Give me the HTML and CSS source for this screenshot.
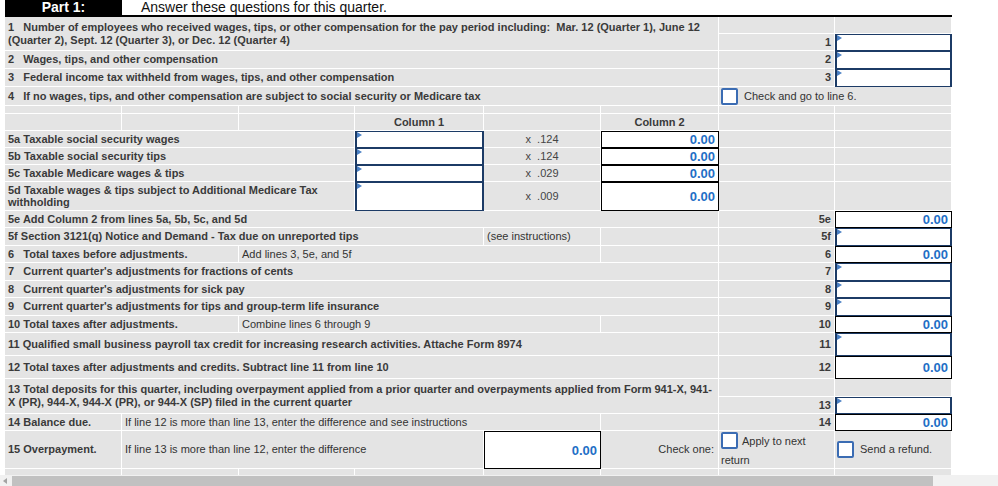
FILE: index.html
```html
<!DOCTYPE html>
<html lang="en">
<head>
    <meta charset="UTF-8">
    <title>Form 941 - Part 1</title>
    <link rel="stylesheet" href="styles.css">
</head>
<body>

    <div class="viewport">
        <div class="sheet">
            <!-- header -->
            <div class="part">Part 1:</div>
            <div class="title s7">Answer these questions for this quarter.</div>

            <!-- line 1 -->
            <div class="c lbl s6 r2">1&nbsp;&nbsp; Number of employees who received wages, tips, or other compensation for the pay period including:&nbsp; Mar. 12 (Quarter 1), June 12 (Quarter 2), Sept. 12 (Quarter 3), or Dec. 12 (Quarter 4)</div>
            <div class="c"></div>
            <div class="c"></div>
            <div class="c num">1</div>
            <div class="c in"></div>

            <div class="c lbl s6">2&nbsp;&nbsp; Wages, tips, and other compensation</div>
            <div class="c num">2</div>
            <div class="c in"></div>

            <div class="c lbl s6">3&nbsp;&nbsp; Federal income tax withheld from wages, tips, and other compensation</div>
            <div class="c num">3</div>
            <div class="c in"></div>

            <div class="c lbl s6">4&nbsp;&nbsp; If no wages, tips, and other compensation are subject to social security or Medicare tax</div>
            <div class="c s2 check"><span class="box"></span>Check and go to line 6.</div>

            <!-- spacer + column heads -->
            <div class="c"></div><div class="c"></div><div class="c"></div><div class="c"></div>
            <div class="c"></div><div class="c"></div><div class="c"></div><div class="c"></div>

            <div class="c"></div><div class="c"></div><div class="c"></div>
            <div class="c head">Column 1</div>
            <div class="c"></div>
            <div class="c head">Column 2</div>
            <div class="c"></div><div class="c"></div>

            <!-- line 5 -->
            <div class="c lbl s3">5a Taxable social security wages</div>
            <div class="c in"></div>
            <div class="c rate">x&nbsp;&nbsp;.124</div>
            <div class="c out">0.00</div>
            <div class="c"></div><div class="c"></div>

            <div class="c lbl s3">5b Taxable social security tips</div>
            <div class="c in"></div>
            <div class="c rate">x&nbsp;&nbsp;.124</div>
            <div class="c out">0.00</div>
            <div class="c"></div><div class="c"></div>

            <div class="c lbl s3">5c Taxable Medicare wages &amp; tips</div>
            <div class="c in"></div>
            <div class="c rate">x&nbsp;&nbsp;.029</div>
            <div class="c out">0.00</div>
            <div class="c"></div><div class="c"></div>

            <div class="c lbl s3 tight">5d Taxable wages &amp; tips subject to Additional Medicare Tax withholding</div>
            <div class="c in"></div>
            <div class="c rate">x&nbsp;&nbsp;.009</div>
            <div class="c out">0.00</div>
            <div class="c"></div><div class="c"></div>

            <div class="c lbl s6">5e Add Column 2 from lines 5a, 5b, 5c, and 5d</div>
            <div class="c num">5e</div>
            <div class="c out">0.00</div>

            <div class="c lbl s4">5f Section 3121(q) Notice and Demand - Tax due on unreported tips</div>
            <div class="c note">(see instructions)</div>
            <div class="c"></div>
            <div class="c num">5f</div>
            <div class="c in"></div>

            <!-- lines 6 - 10 -->
            <div class="c lbl s2">6&nbsp;&nbsp; Total taxes before adjustments.</div>
            <div class="c note s3">Add lines 3, 5e, and 5f</div>
            <div class="c"></div>
            <div class="c num">6</div>
            <div class="c out">0.00</div>

            <div class="c lbl s6">7&nbsp;&nbsp; Current quarter's adjustments for fractions of cents</div>
            <div class="c num">7</div>
            <div class="c in"></div>

            <div class="c lbl s6">8&nbsp;&nbsp; Current quarter's adjustments for sick pay</div>
            <div class="c num">8</div>
            <div class="c in"></div>

            <div class="c lbl s6">9&nbsp;&nbsp; Current quarter's adjustments for tips and group-term life insurance</div>
            <div class="c num">9</div>
            <div class="c in"></div>

            <div class="c lbl s2">10 Total taxes after adjustments.</div>
            <div class="c note s3">Combine lines 6 through 9</div>
            <div class="c"></div>
            <div class="c num">10</div>
            <div class="c out">0.00</div>

            <!-- lines 11 - 15 -->
            <div class="c lbl s6">11 Qualified small business payroll tax credit for increasing research activities. Attache Form 8974</div>
            <div class="c num">11</div>
            <div class="c in"></div>

            <div class="c lbl s6">12 Total taxes after adjustments and credits. Subtract line 11 from line 10</div>
            <div class="c num">12</div>
            <div class="c out">0.00</div>

            <div class="c lbl s6 r2">13 Total deposits for this quarter, including overpayment applied from a prior quarter and overpayments applied from Form 941-X, 941-X (PR), 944-X, 944-X (PR), or 944-X (SP) filed in the current quarter</div>
            <div class="c"></div>
            <div class="c"></div>
            <div class="c num">13</div>
            <div class="c in"></div>

            <div class="c lbl">14 Balance due.</div>
            <div class="c note s4">If line 12 is more than line 13, enter the difference and see instructions</div>
            <div class="c"></div>
            <div class="c num">14</div>
            <div class="c out">0.00</div>

            <div class="c lbl">15 Overpayment.</div>
            <div class="c note s3">If line 13 is more than line 12, enter the difference</div>
            <div class="c out">0.00</div>
            <div class="c note right">Check one:</div>
            <div class="c opt wrap"><span class="box"></span>Apply to next return</div>
            <div class="c opt"><span class="box"></span>Send a refund.</div>

            <div class="c"></div><div class="c"></div><div class="c"></div><div class="c"></div>
            <div class="c"></div><div class="c"></div><div class="c"></div><div class="c"></div>
        </div>
    </div>

    <div class="hscroll">
        <span class="arrow"></span>
        <span class="thumb"></span>
    </div>

</body>
</html>
```

FILE: styles.css
```css
* {
    box-sizing: border-box;
}
body {
    margin: 0;
    background-color: #fff;
    font-family: "Liberation Sans", Arial, sans-serif;
}
.viewport {
    height: 475px;
    overflow: hidden;
}
.sheet {
    display: grid;
    grid-template-columns: 117px 117px 116px 129px 117px 118px 116px 117px;
    grid-template-rows: 17px 17px 17px 18px 18px 19px 8px 17px 17px 17px 17px 29px 17px 18px 17px 18px 17px 18px 17px 23px 23px 18px 17px 17px 38px 20px;
    margin-left: 5px;
    width: 947px;
}

/* header */
.part {
    background-color: #000;
    color: #fff;
    font-weight: bold;
    font-size: 14px;
    text-align: center;
    line-height: 15px;
}
.title {
    background-color: #fff;
    border-bottom: 2px solid #000;
    font-size: 14px;
    line-height: 14px;
    padding-left: 19px;
    color: #111;
}

/* cells */
.c {
    display: flex;
    align-items: center;
    background-color: #e4e4e4;
    border-right: 1px solid #fff;
    border-bottom: 1px solid #fff;
    font-size: 11px;
    line-height: 13px;
    color: #333;
    padding: 0 3px;
    min-width: 0;
}
.s2 { grid-column: span 2; }
.s3 { grid-column: span 3; }
.s4 { grid-column: span 4; }
.s6 { grid-column: span 6; }
.s7 { grid-column: span 7; }
.r2 { grid-row: span 2; }

.lbl {
    font-weight: bold;
    color: #3a3a3a;
}
.tight {
    line-height: 12px;
}
.num {
    justify-content: flex-end;
    font-weight: bold;
    color: #3a3a3a;
}
.head {
    justify-content: center;
    font-weight: bold;
    color: #3a3a3a;
}
.rate {
    justify-content: center;
    color: #444;
}
.note {
    color: #333;
}
.right {
    justify-content: flex-end;
    padding-right: 4px;
}

/* entry boxes */
.in {
    position: relative;
    background-color: #fff;
    border: 2px solid #1c3b66;
    border-top-width: 1px;
    border-bottom-width: 1px;
}
.in::before {
    content: "";
    position: absolute;
    top: 0;
    left: 0;
    border-left: 5px solid #4a80c4;
    border-top: 3px solid transparent;
    border-bottom: 3px solid transparent;
}
.out {
    justify-content: flex-end;
    background-color: #fff;
    border: 1px solid #000;
    color: #1f6fc6;
    font-size: 13px;
    font-weight: bold;
    padding-right: 3px;
}

/* check boxes */
.box {
    display: inline-block;
    flex: none;
    width: 17px;
    height: 17px;
    border: 2px solid #3b6cb3;
    border-radius: 2px;
    background-color: #fff;
    vertical-align: middle;
}
.check {
    padding-left: 2px;
}
.check .box {
    margin-right: 6px;
}
.opt {
    padding-left: 2px;
}
.opt .box {
    margin-right: 6px;
}
.wrap {
    display: block;
    line-height: 18px;
    padding-top: 1px;
}
.wrap .box {
    margin-right: 4px;
    position: relative;
    top: -2px;
}

/* horizontal scroll bar */
.hscroll {
    display: flex;
    align-items: center;
    height: 11px;
    background-color: #f1f1f1;
}
.arrow {
    width: 0;
    height: 0;
    margin: 0 5px 0 3px;
    border-right: 4px solid #a3a3a3;
    border-top: 3px solid transparent;
    border-bottom: 3px solid transparent;
}
.thumb {
    width: 921px;
    height: 10px;
    margin-top: 1px;
    background-color: #c1c1c1;
}
```
